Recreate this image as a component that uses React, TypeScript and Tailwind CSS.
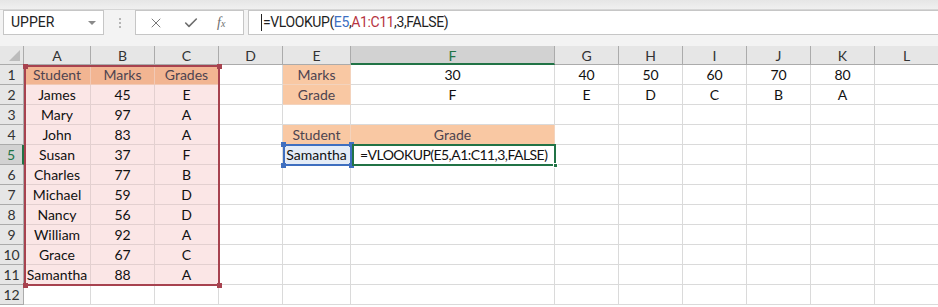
import { Check, X } from "lucide-react";

type CellData = {
  text?: string;
  fill?: string;
  align?: "center" | "left";
  dim?: boolean;
};

const COLS = ["A", "B", "C", "D", "E", "F", "G", "H", "I", "J", "K", "L"];

const ORANGE = "bg-[#f9c8a3] border-[#f3d3bd]";
const RANGE_HEAD = "bg-[#f2b592] border-[#f1c9b6]";
const RANGE_BODY = "bg-[#fbe6e6] border-[#e3d0d0]";

// rows keyed by column letter
const SHEET: Record<string, CellData>[] = [
  {
    A: { text: "Student", fill: RANGE_HEAD, dim: true },
    B: { text: "Marks", fill: RANGE_HEAD, dim: true },
    C: { text: "Grades", fill: RANGE_HEAD, dim: true },
    E: { text: "Marks", fill: ORANGE, dim: true },
    F: { text: "30" },
    G: { text: "40" },
    H: { text: "50" },
    I: { text: "60" },
    J: { text: "70" },
    K: { text: "80" },
  },
  {
    A: { text: "James" },
    B: { text: "45" },
    C: { text: "E" },
    E: { text: "Grade", fill: ORANGE, dim: true },
    F: { text: "F" },
    G: { text: "E" },
    H: { text: "D" },
    I: { text: "C" },
    J: { text: "B" },
    K: { text: "A" },
  },
  { A: { text: "Mary" }, B: { text: "97" }, C: { text: "A" } },
  {
    A: { text: "John" },
    B: { text: "83" },
    C: { text: "A" },
    E: { text: "Student", fill: ORANGE, dim: true },
    F: { text: "Grade", fill: ORANGE, dim: true },
  },
  {
    A: { text: "Susan" },
    B: { text: "37" },
    C: { text: "F" },
    E: { text: "Samantha", fill: "bg-[#e4ecf7] border-[#d4d4d4]" },
    F: { text: "=VLOOKUP(E5,A1:C11,3,FALSE)", align: "left" },
  },
  { A: { text: "Charles" }, B: { text: "77" }, C: { text: "B" } },
  { A: { text: "Michael" }, B: { text: "59" }, C: { text: "D" } },
  { A: { text: "Nancy" }, B: { text: "56" }, C: { text: "D" } },
  { A: { text: "William" }, B: { text: "92" }, C: { text: "A" } },
  { A: { text: "Grace" }, B: { text: "67" }, C: { text: "C" } },
  { A: { text: "Samantha" }, B: { text: "88" }, C: { text: "A" } },
  {},
];

function Handle({ className }: { className: string }) {
  return <span className={`absolute h-[5px] w-[5px] ${className}`} />;
}

function FormulaBar() {
  return (
    <div className="h-[46px] bg-[#f3f3f3]">
      <div className="h-[10px] border-b border-[#d6d6d6] bg-gradient-to-b from-[#e6e6e6] to-[#f0f0f0]" />
      <div className="flex h-[25px] items-stretch pl-[3px] font-['Roboto',sans-serif]">
        <div className="relative flex w-[101px] items-center border border-[#c6c6c6] bg-white pl-[7px] text-[14px] text-[#222]">
          UPPER
          <span className="absolute right-[7px] top-[10px] h-0 w-0 border-x-[4px] border-t-[4px] border-x-transparent border-t-[#8a8a8a]" />
        </div>
        <div className="flex w-[31px] flex-col items-center justify-center gap-[2px]">
          <span className="h-[2px] w-[2px] bg-[#b5b5b5]" />
          <span className="h-[2px] w-[2px] bg-[#b5b5b5]" />
          <span className="h-[2px] w-[2px] bg-[#b5b5b5]" />
        </div>
        <div className="flex w-[109px] items-center border border-[#c6c6c6] bg-white">
          <X className="ml-[12px] h-[16px] w-[16px] text-[#6e6e6e]" strokeWidth={1.4} />
          <Check className="ml-[19px] h-[16px] w-[16px] text-[#6e6e6e]" strokeWidth={2.4} />
          <span className="ml-[18px] font-['Liberation_Serif',serif] text-[14px] italic text-[#6e6e6e]">
            f<span className="text-[10px]">x</span>
          </span>
        </div>
        <div className="ml-[4px] flex flex-1 items-center border border-r-0 border-[#c6c6c6] bg-white pl-[12px] text-[14px] tracking-[-0.4px] text-[#1f1f1f]">
          <span className="mr-[1px] h-[17px] w-px bg-[#222]" />
          =VLOOKUP(<span className="text-[#3d6fc1]">E5</span>,
          <span className="text-[#b6343f]">A1:C11</span>,3,FALSE)
        </div>
      </div>
    </div>
  );
}

export default function App() {
  return (
    <div className="h-[307px] w-[938px] overflow-hidden bg-white font-['Lato','Open_Sans',sans-serif]">
      <FormulaBar />

      <div className="relative">
        <div className="grid grid-cols-[24px_67px_64px_64px_64px_68px_204px_64px_64px_64px_64px_64px_64px] grid-rows-[19px_repeat(12,20px)]">
          {/* corner */}
          <div className="relative border-b border-r border-[#ababab] bg-[#e6e6e6]">
            <span className="absolute bottom-[3px] right-[3px] h-[11px] w-[11px] bg-[#bcbcbc] [clip-path:polygon(100%_0,100%_100%,0_100%)]" />
          </div>
          {COLS.map((c) =>
            c === "F" ? (
              <div
                key={c}
                className="flex items-center justify-center border-b-2 border-r border-b-[#217346] border-r-[#ababab] bg-[#d2d2d2] pt-[1px] text-[14px] text-[#217346]"
              >
                {c}
              </div>
            ) : (
              <div
                key={c}
                className="flex items-center justify-center border-b border-r border-[#ababab] bg-[#e6e6e6] text-[14px] text-[#333]"
              >
                {c}
              </div>
            ),
          )}

          {SHEET.map((row, r) => (
            <Row key={r} index={r + 1} row={row} />
          ))}
        </div>

        {/* referenced range A1:C11 */}
        <div className="pointer-events-none absolute left-[24px] top-[19px] h-[221px] w-[196px] border-2 border-[#a7424f]">
          <Handle className="-left-[3px] -top-[3px] bg-[#a7424f]" />
          <Handle className="-right-[4px] -top-[3px] bg-[#a7424f]" />
          <Handle className="-bottom-[4px] -left-[3px] bg-[#a7424f]" />
          <Handle className="-bottom-[4px] -right-[4px] bg-[#a7424f]" />
        </div>

        {/* referenced cell E5 */}
        <div className="pointer-events-none absolute left-[283px] top-[98px] h-[22px] w-[69px] border-2 border-[#3f6fc0]">
          <Handle className="-left-[4px] -top-[4px] bg-[#3f6fc0]" />
          <Handle className="-right-[4px] -top-[4px] bg-[#3f6fc0]" />
          <Handle className="-bottom-[4px] -left-[4px] bg-[#3f6fc0]" />
          <Handle className="-bottom-[4px] -right-[4px] bg-[#3f6fc0]" />
        </div>

        {/* active cell F5 */}
        <div className="pointer-events-none absolute left-[352px] top-[98px] h-[22px] w-[204px] border-2 border-[#217346]">
          <Handle className="-bottom-[4px] -right-[4px] border border-white bg-[#217346]" />
        </div>
      </div>
    </div>
  );
}

function Row({ index, row }: { index: number; row: Record<string, CellData> }) {
  const active = index === 5;
  return (
    <>
      <div
        className={
          active
            ? "flex items-center justify-center border-b border-r-2 border-b-[#ababab] border-r-[#217346] bg-[#d2d2d2] text-[14px] text-[#217346]"
            : "flex items-center justify-center border-b border-r border-[#ababab] bg-[#e6e6e6] text-[14px] text-[#333]"
        }
      >
        {index}
      </div>
      {COLS.map((c) => {
        const cell = row[c];
        const inRange = index >= 2 && index <= 11 && (c === "A" || c === "B" || c === "C");
        const fill = cell?.fill ?? (inRange ? RANGE_BODY : "border-[#dadada]");
        return (
          <div
            key={c}
            className={`flex items-center overflow-visible whitespace-nowrap border-b border-r text-[14px] leading-none ${fill} ${
              cell?.align === "left" ? "justify-start pl-[9px] tracking-[-0.55px]" : "justify-center"
            } ${cell?.dim ? "text-[#4e4450]" : "text-[#111]"}`}
          >
            {cell?.text}
          </div>
        );
      })}
    </>
  );
}
